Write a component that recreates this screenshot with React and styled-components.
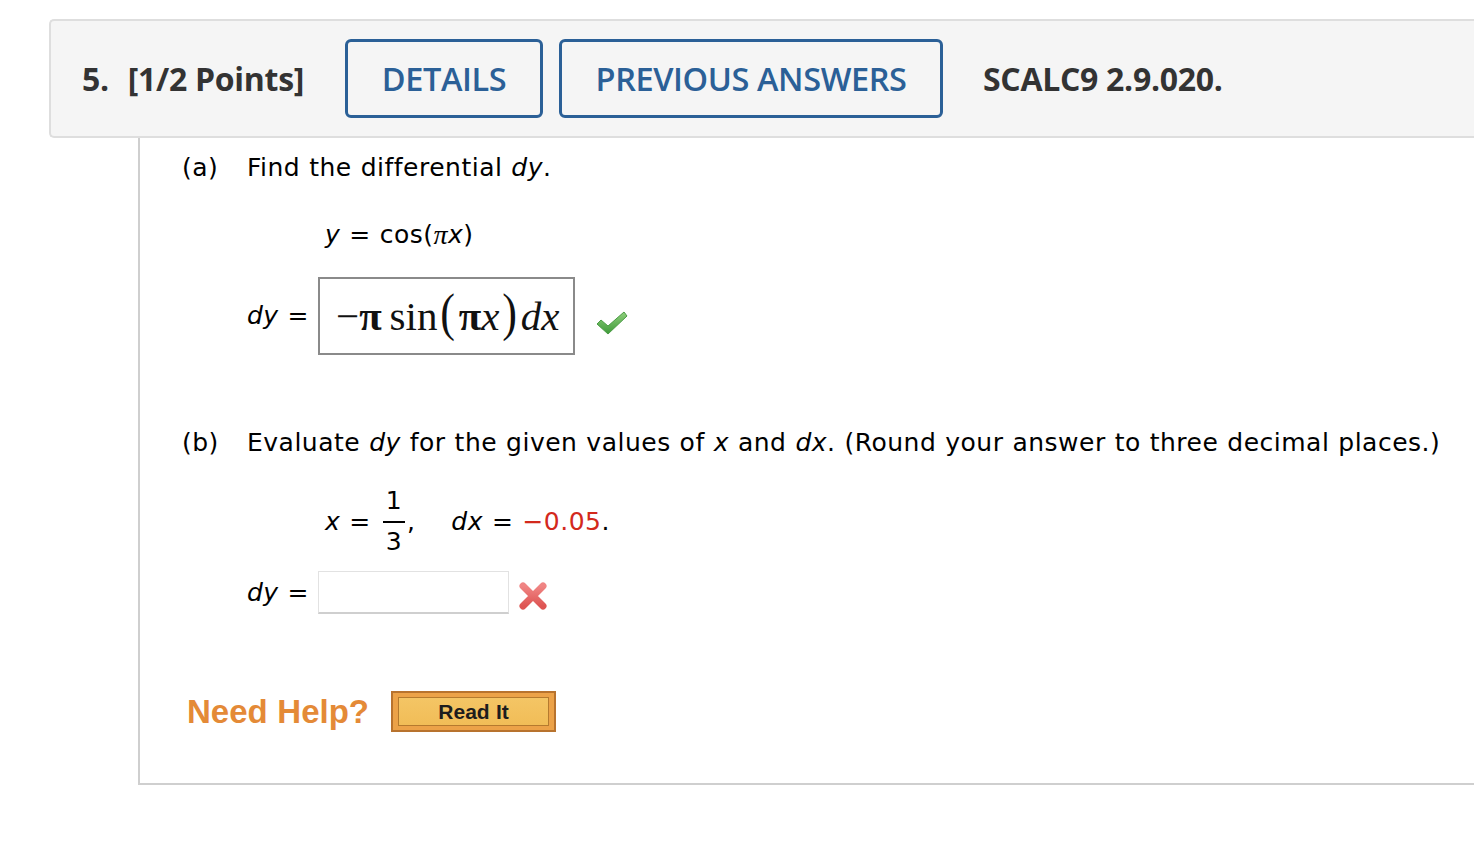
import React from "react";
import styled, { createGlobalStyle } from "styled-components";

const Global = createGlobalStyle`
  html, body { margin: 0; padding: 0; background: #ffffff; }
  body { font-family: "DejaVu Sans", Verdana, sans-serif; color: #000; }
`;

const Page = styled.div`
  padding: 19px 0 0 49px;
  width: 1474px;
  box-sizing: border-box;
`;

const Header = styled.div`
  display: flex;
  align-items: center;
  height: 119px;
  box-sizing: border-box;
  background: #f5f5f5;
  border: 2px solid #dedede;
  border-right: none;
  border-radius: 5px 0 0 5px;
  padding-left: 31px;
  font-family: "Open Sans", sans-serif;
  color: #333;
`;

const HeadLabel = styled.span`
  font-size: 32px;
  font-weight: 700;
  margin-right: ${(p) => p.$mr || 0}px;
  letter-spacing: -0.3px;
`;

const HeadButton = styled.div`
  display: flex;
  align-items: center;
  justify-content: center;
  width: ${(p) => p.$w}px;
  height: 79px;
  box-sizing: border-box;
  border: 3px solid #2b6097;
  border-radius: 6px;
  color: #2b6097;
  font-size: 32.5px;
  font-weight: 600;
  margin-right: ${(p) => p.$mr || 0}px;
  letter-spacing: -0.4px;
`;

const Content = styled.div`
  margin-left: 89px;
  height: 647px;
  box-sizing: border-box;
  border-left: 2px solid #cfcfcf;
  border-bottom: 2px solid #cfcfcf;
  padding: 15px 0 0 42px;
  font-size: 25px;
  line-height: 30px;
  letter-spacing: 0.5px;
  word-spacing: 0.5px;
`;

const Part = styled.div`
  display: flex;
  margin-top: ${(p) => p.$mt || 0}px;
`;

const PartLabel = styled.div`
  width: 65px;
  flex: none;
`;

const PartBody = styled.div`
  display: flex;
  flex-direction: column;
`;

const I = styled.i`
  font-style: italic;
`;

const Pi = styled.span`
  font-family: "Liberation Serif", serif;
  font-style: italic;
  font-size: 28px;
`;

const EqLine = styled.div`
  display: flex;
  align-items: center;
  margin-left: ${(p) => p.$ml || 0}px;
  margin-top: ${(p) => p.$mt || 0}px;
  white-space: pre;
`;

const AnsRow = styled.div`
  display: flex;
  align-items: center;
  margin-top: ${(p) => p.$mt || 0}px;
`;

const AnsLabel = styled.div`
  width: 71px;
  flex: none;
  white-space: pre;
`;

const MathBox = styled.div`
  display: flex;
  align-items: center;
  width: 257px;
  height: 78px;
  box-sizing: border-box;
  border: 2px solid #8a8a8a;
  padding-left: 16px;
  font-family: "Liberation Serif", "DejaVu Serif", serif;
  font-size: 41px;
  letter-spacing: 0;
  color: #111;
  white-space: pre;
`;

const MUp = styled.span`
  font-style: normal;
  font-weight: ${(p) => (p.$b ? 700 : 400)};
  margin-right: ${(p) => p.$mr || 0}px;
`;

const MIt = styled.span`
  font-style: italic;
`;

const Paren = styled.span`
  font-size: 52px;
  font-weight: 300;
  display: inline-block;
  transform: scaleX(0.85);
  margin: -6px ${(p) => p.$m || 0}px 0;
`;

const Mark = styled.svg`
  flex: none;
  margin-left: ${(p) => p.$ml}px;
  margin-top: ${(p) => p.$mt || 0}px;
`;

const Frac = styled.span`
  display: inline-flex;
  flex-direction: column;
  align-items: center;
  margin: 0 2px 0 12px;
  line-height: 28px;
`;

const FracNum = styled.span`
  padding: 0 3px 6px;
  border-bottom: 2px solid #000;
`;

const FracDen = styled.span`
  padding-top: 5px;
`;

const Red = styled.span`
  color: #d3291c;
`;

const Input = styled.div`
  width: 191px;
  height: 43px;
  box-sizing: border-box;
  border: 1px solid #e2e2e2;
  border-bottom: 2px solid #cfcfcf;
  background: #fff;
`;

const HelpRow = styled.div`
  display: flex;
  align-items: center;
  margin: 77px 0 0 5px;
`;

const NeedHelp = styled.span`
  font-family: "Liberation Sans", Arial, sans-serif;
  font-weight: 700;
  font-size: 33px;
  letter-spacing: 0;
  color: #e48a37;
  margin-right: 22px;
`;

const ReadIt = styled.div`
  width: 165px;
  height: 41px;
  box-sizing: border-box;
  border: 2px solid #b8732e;
  background: #eca248;
  padding: 4px 5px;
  display: flex;
`;

const ReadItInner = styled.div`
  flex: 1;
  border: 1px solid #b57a2e;
  background: linear-gradient(#f4c565, #f1bd57);
  display: flex;
  align-items: center;
  justify-content: center;
  font-family: "Liberation Sans", Arial, sans-serif;
  font-weight: 700;
  font-size: 21px;
  letter-spacing: 0;
  color: #1d1d1d;
`;

const Check = () => (
  <Mark width="32" height="26" viewBox="0 0 32 26" $ml={21} $mt={14}>
    <defs>
      <linearGradient id="cg" x1="0" y1="0" x2="0" y2="1">
        <stop offset="0" stopColor="#8fcf7c" />
        <stop offset="1" stopColor="#3f9a3a" />
      </linearGradient>
    </defs>
    <path
      d="M1 14 L5 10 L12 16 L28 2 L31 6 L12 24 Z"
      fill="url(#cg)"
      stroke="#4b9c45"
      strokeWidth="1"
      strokeLinejoin="round"
    />
  </Mark>
);

const Cross = () => (
  <Mark width="30" height="30" viewBox="0 0 30 30" $ml={9} $mt={6}>
    <defs>
      <linearGradient id="xg" x1="0" y1="0" x2="0" y2="1">
        <stop offset="0" stopColor="#f08584" />
        <stop offset="1" stopColor="#de5553" />
      </linearGradient>
    </defs>
    <path
      d="M5 5 L25 25 M25 5 L5 25"
      stroke="url(#xg)"
      strokeWidth="7"
      strokeLinecap="round"
    />
  </Mark>
);

export default function App() {
  return (
    <Page>
      <Global />
      <Header>
        <HeadLabel $mr={19}>5.</HeadLabel>
        <HeadLabel $mr={41}>[1/2 Points]</HeadLabel>
        <HeadButton $w={198} $mr={16}>DETAILS</HeadButton>
        <HeadButton $w={384} $mr={40}>PREVIOUS ANSWERS</HeadButton>
        <HeadLabel>SCALC9 2.9.020.</HeadLabel>
      </Header>
      <Content>
        <Part>
          <PartLabel>(a)</PartLabel>
          <PartBody>
            <div>
              Find the differential <I>dy</I>.
            </div>
            <EqLine $ml={78} $mt={37}>
              <I>y</I> = cos(<Pi>π</Pi><I>x</I>)
            </EqLine>
            <AnsRow $mt={27}>
              <AnsLabel>
                <I>dy</I> =
              </AnsLabel>
              <MathBox>
                <MUp>−</MUp>
                <MUp $b $mr={8}>π</MUp>
                <MUp>sin</MUp>
                <Paren $m={2}>(</Paren>
                <MUp $b>π</MUp>
                <MIt>x</MIt>
                <Paren $m={2}>)</Paren>
                <MIt>dx</MIt>
              </MathBox>
              <Check />
            </AnsRow>
          </PartBody>
        </Part>
        <Part $mt={73}>
          <PartLabel>(b)</PartLabel>
          <PartBody>
            <div>
              Evaluate <I>dy</I> for the given values of <I>x</I> and <I>dx</I>. (Round your answer to three decimal places.)
            </div>
            <EqLine $ml={78} $mt={29}>
              <I>x</I> =
              <Frac>
                <FracNum>1</FracNum>
                <FracDen>3</FracDen>
              </Frac>
              ,{"    "}
              <I>dx</I> = <Red>−0.05</Red>.
            </EqLine>
            <AnsRow $mt={15}>
              <AnsLabel>
                <I>dy</I> =
              </AnsLabel>
              <Input />
              <Cross />
            </AnsRow>
          </PartBody>
        </Part>
        <HelpRow>
          <NeedHelp>Need Help?</NeedHelp>
          <ReadIt>
            <ReadItInner>Read It</ReadItInner>
          </ReadIt>
        </HelpRow>
      </Content>
    </Page>
  );
}
